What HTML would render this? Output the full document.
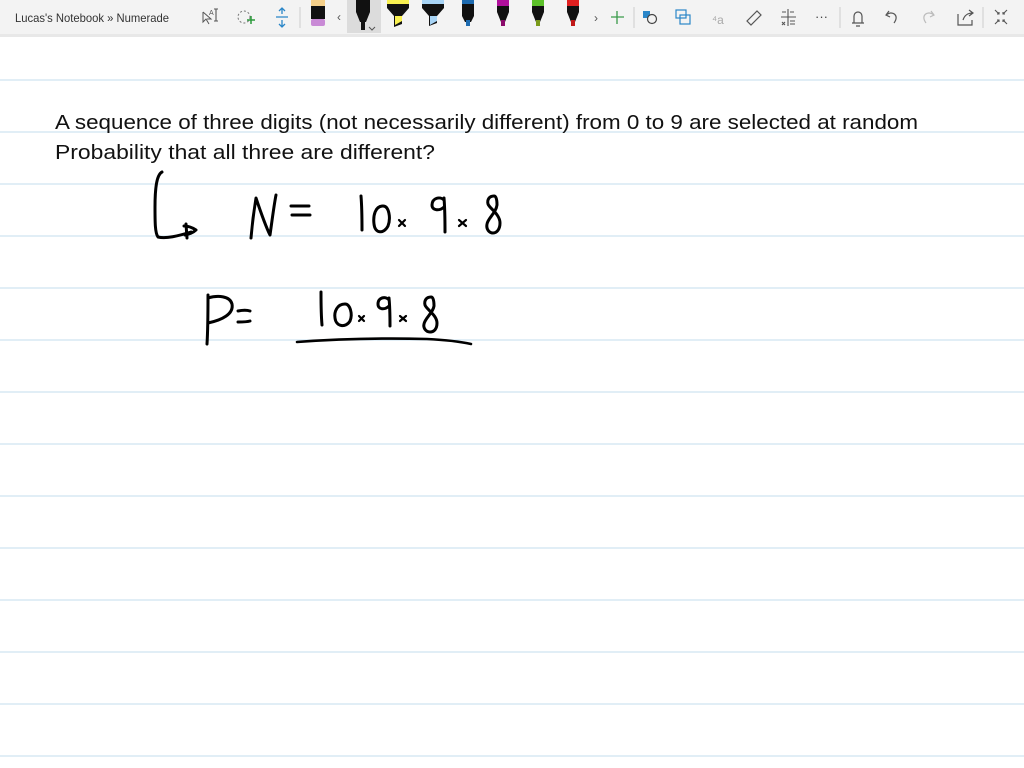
<!DOCTYPE html>
<html><head><meta charset="utf-8">
<style>
html,body{margin:0;padding:0;width:1024px;height:768px;overflow:hidden;background:#fff;font-family:"Liberation Sans",sans-serif}
svg{position:absolute;left:0;top:0}
</style></head><body>
<svg width="1024" height="768" viewBox="0 0 1024 768">
<g stroke="#cfe3f0" stroke-width="1.3">
<line x1="0" y1="80" x2="1024" y2="80"/><line x1="0" y1="132" x2="1024" y2="132"/>
<line x1="0" y1="184" x2="1024" y2="184"/><line x1="0" y1="236" x2="1024" y2="236"/>
<line x1="0" y1="288" x2="1024" y2="288"/><line x1="0" y1="340" x2="1024" y2="340"/>
<line x1="0" y1="392" x2="1024" y2="392"/><line x1="0" y1="444" x2="1024" y2="444"/>
<line x1="0" y1="496" x2="1024" y2="496"/><line x1="0" y1="548" x2="1024" y2="548"/>
<line x1="0" y1="600" x2="1024" y2="600"/><line x1="0" y1="652" x2="1024" y2="652"/>
<line x1="0" y1="704" x2="1024" y2="704"/><line x1="0" y1="756" x2="1024" y2="756"/>
</g>
<rect x="0" y="0" width="1024" height="34" fill="#f3f3f3"/>
<rect x="0" y="34" width="1024" height="3" fill="#e8e8e8"/>
<text x="15" y="22" font-size="12" fill="#333" textLength="154" lengthAdjust="spacingAndGlyphs">Lucas's Notebook » Numerade</text>
<path d="M203 12l0 10 3-3 3 5M203 12l8 7h-4" stroke="#555" stroke-width="1" fill="none"/>
<text x="209" y="15" font-size="7" fill="#555">A</text>
<path d="M214 9h4M216 9v12M214 21h4" stroke="#555" stroke-width="1.1" fill="none"/>
<circle cx="244" cy="17" r="6" fill="none" stroke="#777" stroke-dasharray="2 2"/>
<path d="M251 16v8M247 20h8" stroke="#2a9a3a" stroke-width="1.5"/>
<path d="M276 17h12M282 8v6M279 11l3-3 3 3M282 20v7M279 24l3 3 3-3" stroke="#2a86c8" stroke-width="1.3" fill="none"/>
<line x1="300" y1="7" x2="300" y2="28" stroke="#ccc"/>
<rect x="311" y="0" width="14" height="6" fill="#f5d08a"/><rect x="311" y="6" width="14" height="13" fill="#111"/><rect x="311" y="19" width="14" height="7" rx="2" fill="#c98ad6"/>
<text x="337" y="21" font-size="12" fill="#555">‹</text>
<rect x="347" y="0" width="34" height="33" fill="#dcdcdc"/>
<path d="M356 0h14v12l-4 10h-6l-4-10z" fill="#111"/><path d="M361 22h4v8h-4z" fill="#111"/><path d="M369 27l3 3 3-3" stroke="#555" fill="none"/>
<path d="M387 0h22v8l-7 8v8l-8 3v-11l-7-8z" fill="#111"/><rect x="387" y="0" width="22" height="4" fill="#f8f050"/><path d="M395 16h7v5l-7 4z" fill="#f8f050"/>
<path d="M422 0h22v8l-7 8v7l-8 3v-10l-7-8z" fill="#111"/><rect x="422" y="0" width="22" height="4" fill="#a8d4f5"/><path d="M430 16h7v5l-7 4z" fill="#a8d4f5"/>
<path d="M462 0h12v16l-3 6h-6l-3-6z" fill="#111"/><rect x="462" y="0" width="12" height="4" fill="#1e6bb0"/><rect x="466" y="20" width="4" height="6" fill="#1e6bb0"/>
<path d="M497 0h12v12l-4 10h-4l-4-10z" fill="#111"/><rect x="497" y="0" width="12" height="6" fill="#b0109c"/><rect x="501" y="20" width="4" height="6" fill="#8a0a6a"/>
<path d="M532 0h12v12l-4 10h-4l-4-10z" fill="#111"/><rect x="532" y="0" width="12" height="6" fill="#5cc02a"/><rect x="536" y="20" width="4" height="6" fill="#7a9a1a"/>
<path d="M567 0h12v12l-4 10h-4l-4-10z" fill="#111"/><rect x="567" y="0" width="12" height="6" fill="#e02020"/><rect x="571" y="20" width="4" height="6" fill="#c01818"/>
<text x="594" y="22" font-size="12" fill="#555">›</text>
<path d="M617 11v13M611 17h13" stroke="#3a9a4a" stroke-width="1.3"/>
<line x1="634" y1="7" x2="634" y2="28" stroke="#ccc"/>
<rect x="643" y="11" width="7" height="7" fill="#2a86c8"/><circle cx="652" cy="19" r="4.5" fill="#f3f3f3" stroke="#444" stroke-width="1.2"/>
<rect x="676" y="10" width="10" height="8" fill="none" stroke="#2a86c8" stroke-width="1.2"/><rect x="680" y="15" width="10" height="9" fill="none" stroke="#2a86c8" stroke-width="1.2"/>
<text x="712" y="24" font-size="12" fill="#aaa">⁴a</text>
<path d="M747 21l10-10 4 4-10 10z" fill="none" stroke="#555" stroke-width="1.2"/>
<path d="M788 9v17M781 17h15M782 12h4M790 12h4M782 22l3 3M785 22l-3 3M790 21h5M790 24h5" stroke="#555" stroke-width="1.1"/>
<text x="815" y="21" font-size="13" fill="#444">···</text>
<line x1="840" y1="7" x2="840" y2="28" stroke="#ccc"/>
<path d="M852 23h12M854 23v-7a4 4 0 0 1 8 0v7M856 26h4" stroke="#555" stroke-width="1.2" fill="none"/>
<path d="M889 11l-3 4 4 2M886 15c6-5 14 0 8 8" stroke="#555" stroke-width="1.2" fill="none"/>
<path d="M931 11l3 4-4 2M934 15c-6-5-14 0-8 8" stroke="#bbb" stroke-width="1.2" fill="none"/>
<path d="M958 14v11h14v-5M963 20c2-6 6-7 10-7M969 10l4 3-4 3" stroke="#555" stroke-width="1.2" fill="none"/>
<line x1="983" y1="7" x2="983" y2="28" stroke="#ccc"/>
<path d="M995 10l4 4M1003 14l4-4M995 24l4-4M1003 20l4 4M997 14h2v-2M1005 14h-2v-2M997 20h2v2M1005 20h-2v2" stroke="#555" stroke-width="1.1" fill="none"/>
<text x="55" y="129" font-size="20" fill="#111" textLength="863" lengthAdjust="spacingAndGlyphs">A sequence of three digits (not necessarily different) from 0 to 9 are selected at random</text>
<text x="55" y="159" font-size="20" fill="#111" textLength="380" lengthAdjust="spacingAndGlyphs">Probability that all three are different?</text>
<g fill="none" stroke="#000" stroke-width="3" stroke-linecap="round" stroke-linejoin="round">
<path d="M162 172c-6 3-7 20-7 35c0 15 0 26 3 30c8 2 20-1 33-5"/>
<path d="M186 224l1 14M184 226c5 0 9 2 12 4c-3 3-7 4-11 5"/>
<path d="M251 238c1-12 3-28 5-40c4 12 9 27 14 37c2-14 4-30 6-40"/>
<path d="M291 206h18M292 215h18"/>
<path d="M361 196c1 12 1 24 1 34"/>
<path d="M383 206c-8 0-10 10-9 18c1 10 10 10 14 2c3-8 1-20-5-20z"/>
<path d="M399 220l6 6M405 220l-6 6" stroke-width="2.2"/>
<path d="M444 200c-4-4-12-2-12 5c0 6 8 6 12 2M444 198c1 12 1 24 1 34"/>
<path d="M459 220l7 6M466 220l-7 6" stroke-width="2.2"/>
<path d="M494 196c-5 0-7 4-6 8c1 4 12 10 12 19c0 6-3 10-7 10c-4 0-7-4-6-9c1-6 9-11 10-19c0-6-1-9-3-9z"/>
<path d="M208 295c0 15 0 33-1 49"/>
<path d="M208 298c10-3 22-2 24 6c2 10-10 16-24 19"/>
<path d="M238 311c5-1 9-1 12 0M238 322c5 0 9 0 12-1"/>
<path d="M321 292c0 11 0 22 1 33"/>
<path d="M345 304c-8 0-11 8-10 14c1 9 11 10 15 3c3-7 0-17-5-17z"/>
<path d="M359 316l5 5M364 316l-5 5" stroke-width="2.2"/>
<path d="M389 300c-3-4-11-3-11 4c0 6 7 6 11 2M389 298c1 10 1 20 1 28"/>
<path d="M400 316l6 5M406 316l-6 5" stroke-width="2.2"/>
<path d="M431 297c-5 0-7 4-6 8c1 4 12 10 12 18c0 6-3 9-7 9c-4 0-7-4-6-8c1-6 9-11 10-18c0-6-1-9-3-9z"/>
<path d="M297 342c40-3 90-4 130-3c20 1 35 3 44 5" stroke-width="2.6"/>
</g>
</svg>
</body></html>
